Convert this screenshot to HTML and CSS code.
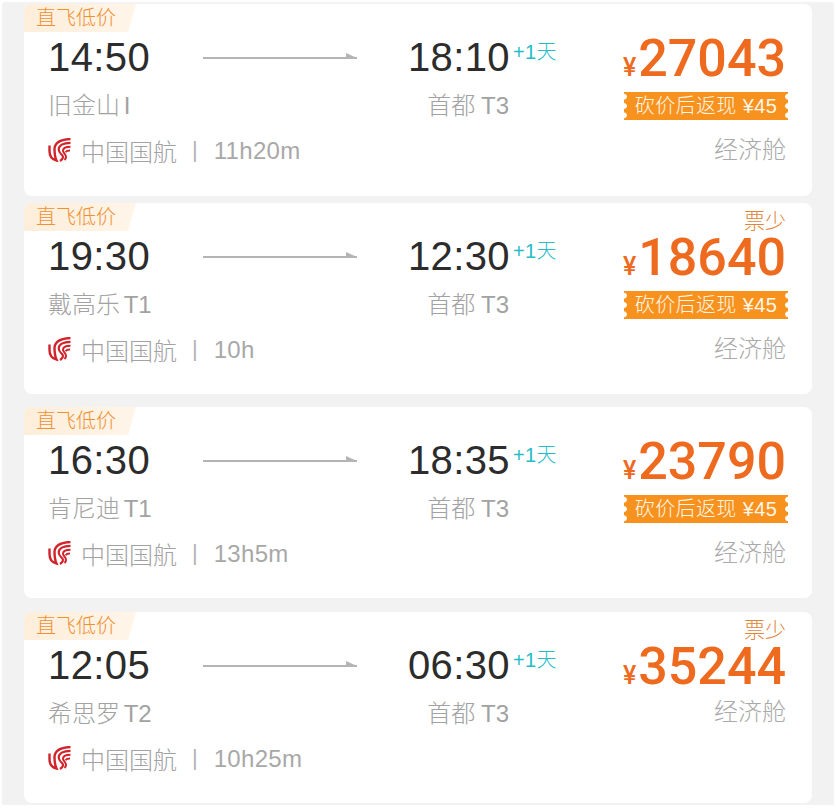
FILE: index.html
```html
<!DOCTYPE html>
<html lang="zh-CN">
<head>
    <meta charset="UTF-8">
    <title>航班列表</title>
    <link rel="stylesheet" href="styles.css">
</head>
<body>
    <svg class="sprites" width="0" height="0">
        <symbol id="logo" viewBox="0 0 23 25">
            <g fill="none" stroke="#d2232a">
                <path d="M1.500 7.500V13C1.500 18 4 21.500 8.500 22.500C6.800 19 6.500 14.500 6.500 10.500C7 5 12 1.500 22.500 1" stroke-width="2.400"/>
                <path d="M22.500 4.800C15 4.800 10.700 7.500 10.700 11.500C10.700 14.500 13 16 14.500 17.500C15.500 19 15 21 12 23" stroke-width="2.200"/>
                <path d="M22.500 8.800C17 8.800 15 10.500 15 12.800C15 15 18 16 18 19C18 20 17.500 21 16.500 22" stroke-width="2"/>
                <path d="M22 12.500C19.800 12.500 18.300 13 17.500 14.200" stroke-width="1.800"/>
            </g>
        </symbol>
        <symbol id="arrow" viewBox="0 0 154 8">
            <rect x="0" y="5" width="154" height="2" fill="#b4b4b4"/>
            <path d="M143 1L154 6H143Z" fill="#b4b4b4"/>
        </symbol>
    </svg>

    <div class="flight-list">
        <!-- 第一条 -->
        <div class="flight-card card-tight">
            <div class="promo-tag">直飞低价</div>
            <div class="flight-info">
                <div class="legs">
                    <div class="time">14:50</div>
                    <svg class="arrow"><use href="#arrow"/></svg>
                    <div class="time time-arrive">18:10</div>
                    <div class="next-day">+1天</div>
                    <div class="airport">旧金山 I</div>
                    <div class="airport airport-arrive">首都 T3</div>
                </div>
                <div class="airline">
                    <svg class="airline-logo"><use href="#logo"/></svg>
                    <span>中国国航</span><span class="divider">|</span><span class="duration">11h20m</span>
                </div>
            </div>
            <div class="fare">
                <div class="stock"></div>
                <div class="price"><span class="currency">¥</span>27043</div>
                <div class="rebate">砍价后返现 ¥45</div>
                <div class="cabin">经济舱</div>
            </div>
        </div>

        <!-- 第二条 -->
        <div class="flight-card">
            <div class="promo-tag">直飞低价</div>
            <div class="flight-info">
                <div class="legs">
                    <div class="time">19:30</div>
                    <svg class="arrow"><use href="#arrow"/></svg>
                    <div class="time time-arrive">12:30</div>
                    <div class="next-day">+1天</div>
                    <div class="airport">戴高乐 T1</div>
                    <div class="airport airport-arrive">首都 T3</div>
                </div>
                <div class="airline">
                    <svg class="airline-logo"><use href="#logo"/></svg>
                    <span>中国国航</span><span class="divider">|</span><span class="duration">10h</span>
                </div>
            </div>
            <div class="fare">
                <div class="stock">票少</div>
                <div class="price"><span class="currency">¥</span>18640</div>
                <div class="rebate">砍价后返现 ¥45</div>
                <div class="cabin">经济舱</div>
            </div>
        </div>

        <!-- 第三条 -->
        <div class="flight-card card-wide">
            <div class="promo-tag">直飞低价</div>
            <div class="flight-info">
                <div class="legs">
                    <div class="time">16:30</div>
                    <svg class="arrow"><use href="#arrow"/></svg>
                    <div class="time time-arrive">18:35</div>
                    <div class="next-day">+1天</div>
                    <div class="airport">肯尼迪 T1</div>
                    <div class="airport airport-arrive">首都 T3</div>
                </div>
                <div class="airline">
                    <svg class="airline-logo"><use href="#logo"/></svg>
                    <span>中国国航</span><span class="divider">|</span><span class="duration">13h5m</span>
                </div>
            </div>
            <div class="fare">
                <div class="stock"></div>
                <div class="price"><span class="currency">¥</span>23790</div>
                <div class="rebate">砍价后返现 ¥45</div>
                <div class="cabin">经济舱</div>
            </div>
        </div>

        <!-- 第四条 -->
        <div class="flight-card">
            <div class="promo-tag">直飞低价</div>
            <div class="flight-info">
                <div class="legs">
                    <div class="time">12:05</div>
                    <svg class="arrow"><use href="#arrow"/></svg>
                    <div class="time time-arrive">06:30</div>
                    <div class="next-day">+1天</div>
                    <div class="airport">希思罗 T2</div>
                    <div class="airport airport-arrive">首都 T3</div>
                </div>
                <div class="airline">
                    <svg class="airline-logo"><use href="#logo"/></svg>
                    <span>中国国航</span><span class="divider">|</span><span class="duration">10h25m</span>
                </div>
            </div>
            <div class="fare">
                <div class="stock">票少</div>
                <div class="price"><span class="currency">¥</span>35244</div>
                <div class="cabin cabin-near">经济舱</div>
            </div>
        </div>
    </div>
</body>
</html>
```

FILE: styles.css
```css
body {
    margin: 0;
    background-color: #fff;
    font-family: "Liberation Sans", "Noto Sans CJK SC", sans-serif;
}

.sprites {
    position: absolute;
}

.flight-list {
    width: 788px;
    height: 801px;
    margin: 3px 0 0 3px;
    padding: 1px 21px 0 21px;
    background-color: #f2f2f2;
    box-shadow: 0 0 2px #ddd;
}

.flight-card {
    position: relative;
    display: flex;
    justify-content: space-between;
    height: 191px;
    margin-bottom: 13px;
    padding: 0 26px 0 25px;
    background-color: #fff;
    border-radius: 8px;
}

.card-tight {
    height: 192px;
    margin-bottom: 7px;
}

.card-wide {
    margin-bottom: 14px;
}

.promo-tag {
    position: absolute;
    top: 0;
    left: 0;
    width: 100px;
    height: 28px;
    padding-left: 12px;
    font-size: 20px;
    font-weight: 300;
    line-height: 28px;
    color: #ee9135;
    background: linear-gradient(90deg, #fdeedb, #fff5e8);
    border-top-left-radius: 8px;
    clip-path: polygon(0 0, 100% 0, 93% 100%, 0 100%);
}

/* 左侧：时间、机场、航司 */
.legs {
    display: grid;
    grid-template-columns: 154px 154px 153px 47px;
    grid-template-rows: 48px 48px;
    padding-top: 30px;
    align-items: center;
}

.time {
    margin: -2px 0 0 -1px;
    font-size: 40px;
    line-height: 48px;
    letter-spacing: 0.4px;
    color: #2c2c2c;
}

.time-arrive {
    margin-left: 0;
    text-align: right;
}

.arrow {
    width: 154px;
    height: 8px;
    margin-top: -5px;
}

.next-day {
    align-self: start;
    margin-top: 4px;
    padding-left: 3px;
    font-size: 20px;
    font-weight: 300;
    line-height: 28px;
    letter-spacing: 0.4px;
    color: #27bcc8;
    white-space: nowrap;
}

.airport {
    margin-left: -1px;
    font-size: 24px;
    font-weight: 300;
    line-height: 48px;
    word-spacing: -3px;
    color: #a2a2a2;
}

.airport-arrive {
    grid-column: 2 / 4;
    margin: 0 1px 0 0;
    word-spacing: -1px;
    text-align: right;
}

.airline {
    display: flex;
    align-items: center;
    height: 36px;
    margin-top: 2px;
    font-size: 24px;
    font-weight: 300;
    color: #a2a2a2;
}

.airline-logo {
    width: 23px;
    height: 25px;
    margin: 0 10px 0 -1px;
}

.divider {
    margin: 0 16px 0 15px;
    font-size: 22px;
    color: #b4b4b4;
}

.duration {
    margin-top: 2px;
    letter-spacing: 0.3px;
    color: #a8a8a8;
}

/* 右侧：价格 */
.fare {
    display: flex;
    flex-direction: column;
    align-items: flex-end;
}

.stock {
    height: 28px;
    margin-top: 4px;
    font-size: 21px;
    line-height: 28px;
    font-weight: 300;
    color: #e2853a;
}

.price {
    height: 46px;
    font-family: Roboto, "Liberation Sans", sans-serif;
    font-size: 52px;
    font-weight: 500;
    line-height: 46px;
    color: #ee6a1f;
    white-space: nowrap;
}

.currency {
    margin-right: 2px;
    font-size: 25px;
    font-weight: 500;
}

.rebate {
    position: relative;
    width: 164px;
    height: 28px;
    margin: 10px -2px 0 0;
    font-size: 20px;
    font-weight: 300;
    line-height: 28px;
    letter-spacing: 0.4px;
    text-align: center;
    color: #fff6e8;
    background-color: #f8921e;
}

/* 票券两侧的锯齿 */
.rebate::before,
.rebate::after {
    content: "";
    position: absolute;
    top: 0;
    width: 4px;
    height: 28px;
    background-size: 4px 9.33px;
}

.rebate::before {
    left: 0;
    background-image: radial-gradient(circle at 0 50%, #fff 2.5px, transparent 3.2px);
}

.rebate::after {
    right: 0;
    background-image: radial-gradient(circle at 100% 50%, #fff 2.5px, transparent 3.2px);
}

.cabin {
    margin-top: 14px;
    font-size: 24px;
    font-weight: 300;
    line-height: 32px;
    color: #aaa;
}

.cabin-near {
    margin-top: 6px;
}
```
